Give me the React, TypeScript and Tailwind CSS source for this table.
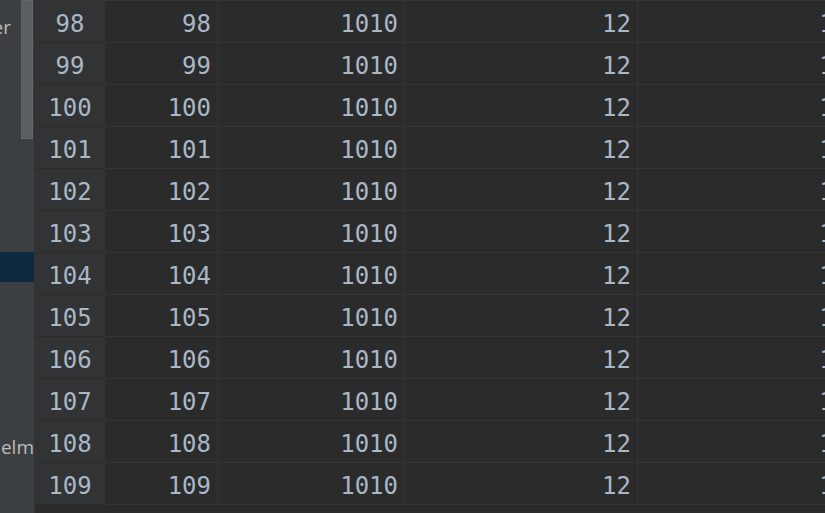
import React from "react";

const rows = Array.from({ length: 12 }, (_, i) => 98 + i);
const mono = { fontFamily: '"DejaVu Sans Mono", "Liberation Mono", monospace' };

export default function App() {
  const sideRows = Array.from({ length: 17 }, (_, i) => i);
  return (
    <div className="w-[825px] h-[513px] overflow-hidden flex bg-[#2b2b2b]">
      {/* sidebar */}
      <div
        className="relative w-[35px] shrink-0 h-full bg-[#3c3f41] overflow-hidden border-r border-[#2f3133]"
        style={{ fontFamily: '"Open Sans", "Noto Sans", sans-serif' }}
      >
        <div className="pt-[12px] flex flex-col">
          {sideRows.map((i) => (
            <div
              key={i}
              className={`h-[30px] flex items-center text-[19px] text-[#bbbbbb] ${
                i === 8 ? "bg-[#0d293e]" : ""
              }`}
            >
              {i === 0 && (
                <div className="w-[11px] flex justify-end whitespace-nowrap">Header</div>
              )}
              {i === 14 && (
                <div className="w-[34px] flex justify-end whitespace-nowrap">Helm</div>
              )}
            </div>
          ))}
        </div>
        <div className="absolute left-[21px] top-0 w-[12px] h-[139px] bg-[#5b5e60] border border-[#636668]" />
      </div>

      {/* grid */}
      <div className="flex-1 flex flex-col border-t border-[#333537] text-[24px] text-[#a9b7c6]" style={mono}>
        {rows.map((n) => (
          <div key={n} className="flex h-[42px] shrink-0">
            <div className="w-[71px] shrink-0 bg-[#313335] border-b border-r border-[#2b2b2b] flex items-center justify-center pt-[4px]">
              {n}
            </div>
            <div className="w-[112px] shrink-0 border-b border-r border-[#353535] flex items-center justify-end pr-[6px] pt-[4px]">
              {n}
            </div>
            <div className="w-[187px] shrink-0 border-b border-r border-[#353535] flex items-center justify-end pr-[6px] pt-[4px]">
              1010
            </div>
            <div className="w-[233px] shrink-0 border-b border-r border-[#353535] flex items-center justify-end pr-[6px] pt-[4px]">
              12
            </div>
            <div className="w-[245px] shrink-0 border-b border-[#353535] flex items-center justify-end pr-[6px] pt-[4px]">
              1010
            </div>
          </div>
        ))}
      </div>
    </div>
  );
}
